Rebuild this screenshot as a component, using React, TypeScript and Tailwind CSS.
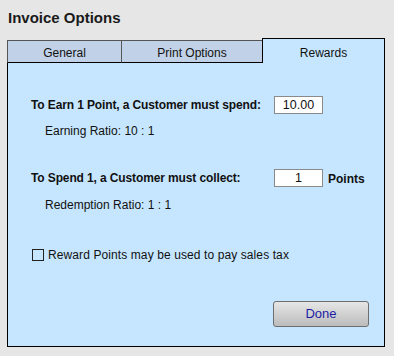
const App = () => {
  const tabs = [
    { label: "General", width: "w-[114px]", active: false },
    { label: "Print Options", width: "w-[141px]", active: false },
    { label: "Rewards", width: "w-[123px]", active: true },
  ];

  return (
    <div className="h-[356px] w-[394px] bg-[#e6e6e6] font-['Liberation_Sans',Arial,sans-serif] text-[12px] text-[#111]">
      <h1 className="h-[38px] pl-[8px] pt-[9px] text-[15px] font-bold leading-[18px] text-[#1a1a1a]">
        Invoice Options
      </h1>

      <div className="ml-[7px] w-[378px]">
        <div className="flex h-[25px] items-end">
          {tabs.map((tab) =>
            tab.active ? (
              <div
                key={tab.label}
                className={`${tab.width} flex h-[25px] items-center justify-center border-x border-t border-black bg-[#c6e6ff] pt-[3px] text-[#111]`}
              >
                {tab.label}
              </div>
            ) : (
              <div
                key={tab.label}
                className={`${tab.width} flex h-[23px] items-center justify-center border-b border-l border-t border-b-black border-l-[#555] border-t-[#555] bg-[#c1d1e7] pt-[3px] text-[#111]`}
              >
                {tab.label}
              </div>
            )
          )}
        </div>

        <div className="flex h-[284px] flex-col border-x border-b border-black bg-[#c6e6ff] pl-[23px]">
          <div className="mt-[33px] flex h-[18px] items-center">
            <span className="w-[243px] font-bold tracking-[-0.12px]">To Earn 1 Point, a Customer must spend:</span>
            <input
              readOnly
              value="10.00"
              className="h-[18px] w-[49px] border border-[#8a8a8a] bg-white text-center text-[12.5px] outline-none"
            />
          </div>
          <div className="mt-[9px] h-[16px] pl-[14px] leading-[16px]">Earning Ratio: 10 : 1</div>

          <div className="mt-[30px] flex h-[18px] items-center">
            <span className="w-[243px] font-bold tracking-[-0.12px]">To Spend 1, a Customer must collect:</span>
            <input
              readOnly
              value="1"
              className="h-[18px] w-[49px] border border-[#8a8a8a] bg-white text-center text-[12.5px] outline-none"
            />
            <span className="ml-[5px] pt-[2px] font-bold">Points</span>
          </div>
          <div className="mt-[10px] h-[16px] pl-[14px] leading-[16px]">Redemption Ratio: 1 : 1</div>

          <label className="mt-[34px] flex h-[16px] items-center">
            <span className="ml-[1px] h-[12px] w-[12px] border border-[#222] bg-[#c6e6ff]" />
            <span className="ml-[4px] leading-[16px] tracking-[0.1px]">Reward Points may be used to pay sales tax</span>
          </label>

          <div className="mt-[38px] flex justify-end pr-[15px]">
            <button className="h-[26px] w-[96px] rounded-[3px] border border-[#6e6e6e] bg-gradient-to-b from-[#e6e6e6] to-[#bcbcbc] text-[13px] text-[#1c1ca6]">
              Done
            </button>
          </div>
        </div>
      </div>
    </div>
  );
};

export default App;
